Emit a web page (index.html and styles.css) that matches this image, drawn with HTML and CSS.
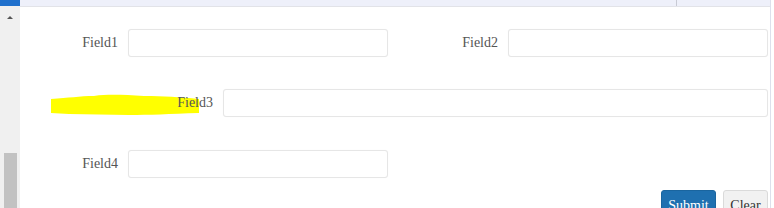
FILE: index.html
```html
<!DOCTYPE html>
<html lang="en">

<head>
    <meta charset="utf-8">
    <title>Fields</title>
    <link rel="stylesheet" href="styles.css">
</head>

<body>
    <div class="frame">
        <div class="side-bar">
            <div class="side-tab"></div>
            <div class="side-arrow"></div>
            <div class="side-thumb"></div>
        </div>
        <div class="main">
            <div class="top-strip"><span class="top-mark"></span></div>
            <form class="my-form" onsubmit="return false;">
                <div class="form-row first-row">
                    <label class="my-label short-label" for="field1">Field1</label>
                    <input id="field1" class="my-input half-input" type="text" />
                    <label class="my-label wide-label" for="field2">Field2</label>
                    <input id="field2" class="my-input half-input" type="text" />
                </div>
                <div class="form-row third-row">
                    <!-- blanked out bit behind the label -->
                    <svg class="marker" width="152" height="24" viewBox="0 0 152 24">
                        <path d="M2 6 C20 5 30 3 45 3 C60 1 75 2 95 3 C115 3 130 4 150 6 L150 20 C120 21 100 22 80 22 C60 22 40 21 20 21 L2 20 Z" fill="#ffff00" />
                    </svg>
                    <label class="my-label long-label" for="field3">Field3</label>
                    <input id="field3" class="my-input full-input" type="text" />
                </div>
                <div class="form-row fourth-row">
                    <label class="my-label short-label" for="field4">Field4</label>
                    <input id="field4" class="my-input half-input" type="text" />
                </div>
                <div class="button-row">
                    <button class="btn btn-submit" type="submit">Submit</button>
                    <button class="btn btn-clear" type="reset">Clear</button>
                </div>
            </form>
        </div>
    </div>
</body>

</html>
```

FILE: styles.css
```css
body {
    margin: 0;
    background-color: #ffffff;
    font-family: "Liberation Serif", "Times New Roman", serif;
    overflow: hidden;
}

.frame {
    display: flex;
    width: 774px;
    height: 208px;
    overflow: hidden;
}

.side-bar {
    position: relative;
    width: 20px;
    flex: none;
    background-color: #f0f0f0;
}

.side-tab {
    height: 6px;
    background-color: #2070cc;
}

.side-arrow {
    width: 0;
    height: 0;
    margin: 10px 0 0 7px;
    border-left: 3px solid transparent;
    border-right: 3px solid transparent;
    border-bottom: 3px solid #555555;
}

.side-thumb {
    position: absolute;
    left: 4px;
    top: 153px;
    width: 13px;
    height: 60px;
    background-color: #c2c2c2;
}

.main {
    width: 750px;
    border-right: 1px solid #dde0ec;
}

.top-strip {
    position: relative;
    height: 6px;
    background-color: #eef0fa;
    border-bottom: 1px solid #e2e3e8;
}

.top-mark {
    position: absolute;
    left: 656px;
    top: 0;
    width: 1px;
    height: 6px;
    background-color: #c8cad4;
}

.my-form {
    margin: 0;
}

.form-row {
    position: relative;
    display: flex;
    align-items: center;
}

.first-row {
    margin-top: 22px;
}

.third-row {
    margin-top: 32px;
}

.fourth-row {
    margin-top: 33px;
}

.my-label {
    position: relative;
    z-index: 1;
    text-align: right;
    margin-right: 10px;
    font-size: 14px;
    color: #555555;
}

.short-label {
    width: 98px;
}

.wide-label {
    width: 110px;
}

.long-label {
    width: 193px;
}

.my-input {
    box-sizing: border-box;
    height: 28px;
    border: 1px solid #e6e6e6;
    border-radius: 3px;
    background-color: #ffffff;
    box-shadow: 0 0 1px #f0f0f0;
}

.half-input {
    width: 260px;
}

.full-input {
    width: 545px;
}

.marker {
    position: absolute;
    left: 29px;
    top: 4px;
}

.button-row {
    display: flex;
    justify-content: flex-end;
    gap: 7px;
    margin-top: 12px;
    margin-right: 2px;
}

.btn {
    height: 28px;
    padding: 4px 0 0 0;
    border-radius: 3px;
    font-family: "Liberation Serif", "Times New Roman", serif;
    font-size: 14px;
    vertical-align: top;
}

.btn-submit {
    width: 55px;
    background-color: #1f70b0;
    border: 1px solid #1a659f;
    color: #ffffff;
}

.btn-clear {
    width: 45px;
    background-color: #f1f1f1;
    border: 1px solid #dadada;
    color: #333333;
}
```
